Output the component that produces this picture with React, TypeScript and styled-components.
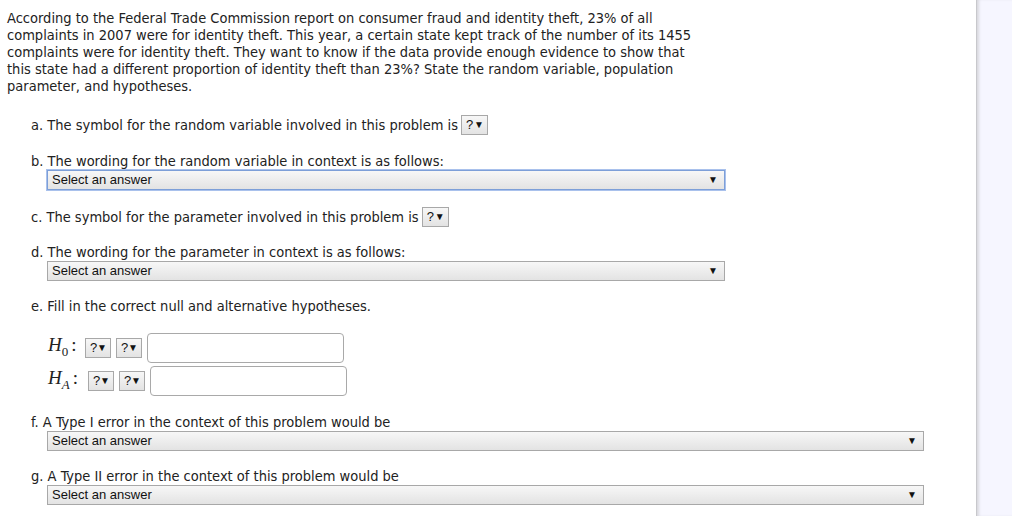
import styled, { createGlobalStyle } from "styled-components";

const GlobalStyle = createGlobalStyle`
  html, body {
    margin: 0;
    padding: 0;
    background: #ffffff;
  }
  body {
    font-family: "DejaVu Sans Condensed", Lato, sans-serif;
    color: #222222;
  }
`;

const Page = styled.div`
  display: flex;
  width: 1012px;
  height: 516px;
  overflow: hidden;
`;

const Main = styled.div`
  width: 976px;
  flex: none;
  padding: 10px 0 0 7px;
  box-sizing: border-box;
  font-size: 14.5px;
  line-height: 17px;
`;

const Side = styled.div`
  flex: 1;
  background: #f6f6ff;
  border-left: 1px solid #c8c8cc;
  box-shadow: inset 3px 0 3px -1px #d8d8de;
`;

const Intro = styled.p`
  margin: 0;
  white-space: nowrap;
`;

const Part = styled.div<{ $gap?: number }>`
  margin: ${(p) => p.$gap ?? 17}px 0 0 24px;
`;

const Line = styled.div`
  display: flex;
  align-items: center;
  gap: 3px;
`;

const Picker = styled.div<{ $width: number; $focus?: boolean }>`
  position: relative;
  width: ${(p) => p.$width}px;
  height: 20px;
  box-sizing: border-box;
  margin-left: ${(p) => (p.$width > 100 ? 16 : 0)}px;
  border: 1px solid ${(p) => (p.$focus ? "#7d9fd8" : "#a8a8a8")};
  box-shadow: ${(p) => (p.$focus ? "0 0 0 1px #a9c1ec" : "none")};
  background: linear-gradient(#f7f7f7, #e3e3e3);
  font-family: "Liberation Sans", Arial, sans-serif;
  font-size: 13px;
  line-height: 18px;
  padding-left: 4px;
  color: #111;
  &::after {
    content: "▼";
    position: absolute;
    right: ${(p) => (p.$width > 100 ? 6 : 3)}px;
    top: 0;
    font-size: 10px;
    line-height: 18px;
    color: #111;
  }
`;

const Hyp = styled.div<{ $gap: number }>`
  display: flex;
  align-items: center;
  gap: 5px;
  margin: ${(p) => p.$gap}px 0 0 41px;
`;

const HLabel = styled.span<{ $w: number }>`
  width: ${(p) => p.$w}px;
  font-family: "Liberation Serif", "Times New Roman", serif;
  font-style: italic;
  font-size: 19px;
  color: #222;
  white-space: nowrap;
  sub {
    font-style: normal;
    font-size: 13px;
  }
  sub.i {
    font-style: italic;
  }
  b {
    font-weight: normal;
    font-style: normal;
    margin-left: 3px;
  }
`;

const Box = styled.div`
  width: 197px;
  height: 30px;
  box-sizing: border-box;
  border: 1px solid #a9a9a9;
  border-radius: 4px;
  background: #fff;
`;

const App = () => (
  <Page>
    <GlobalStyle />
    <Main>
      <Intro>
        According to the Federal Trade Commission report on consumer fraud and identity theft, 23% of all
        <br />
        complaints in 2007 were for identity theft. This year, a certain state kept track of the number of its 1455
        <br />
        complaints were for identity theft. They want to know if the data provide enough evidence to show that
        <br />
        this state had a different proportion of identity theft than 23%? State the random variable, population
        <br />
        parameter, and hypotheses.
      </Intro>

      <Part $gap={20}>
        <Line>
          a. The symbol for the random variable involved in this problem is
          <Picker $width={27}>?</Picker>
        </Line>
      </Part>

      <Part $gap={18}>
        b. The wording for the random variable in context is as follows:
        <Picker $width={678} $focus>
          Select an answer
        </Picker>
      </Part>

      <Part>
        <Line>
          c. The symbol for the parameter involved in this problem is
          <Picker $width={27}>?</Picker>
        </Line>
      </Part>

      <Part>
        d. The wording for the parameter in context is as follows:
        <Picker $width={678}>Select an answer</Picker>
      </Part>

      <Part>e. Fill in the correct null and alternative hypotheses.</Part>

      <Hyp $gap={18}>
        <HLabel $w={32}>
          H<sub>0</sub>
          <b>:</b>
        </HLabel>
        <Picker $width={26}>?</Picker>
        <Picker $width={26}>?</Picker>
        <Box />
      </Hyp>
      <Hyp $gap={3}>
        <HLabel $w={35}>
          H<sub className="i">A</sub>
          <b>:</b>
        </HLabel>
        <Picker $width={26}>?</Picker>
        <Picker $width={26}>?</Picker>
        <Box />
      </Hyp>

      <Part $gap={18}>
        f. A Type I error in the context of this problem would be
        <Picker $width={877}>Select an answer</Picker>
      </Part>

      <Part>
        g. A Type II error in the context of this problem would be
        <Picker $width={877}>Select an answer</Picker>
      </Part>
    </Main>
    <Side />
  </Page>
);

export default App;
